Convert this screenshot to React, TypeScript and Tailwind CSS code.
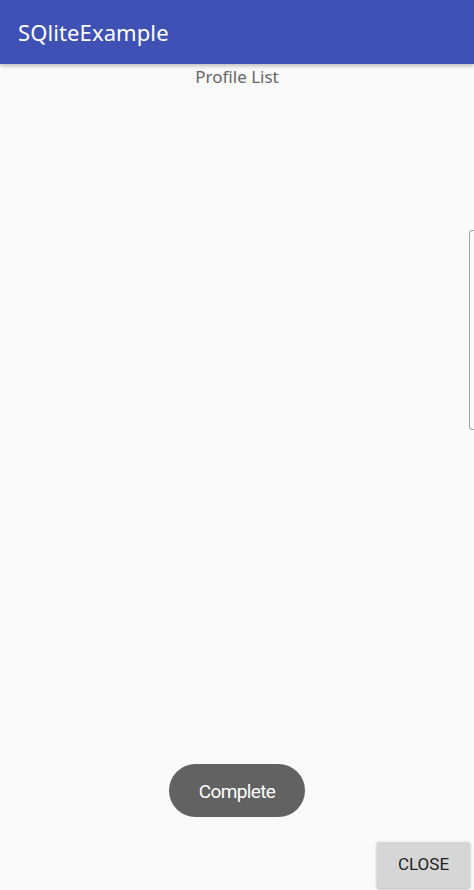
import React from 'react';

const App = () => {
  return (
    <div
      className="relative h-[890px] w-full bg-[#fafafa] flex flex-col overflow-hidden"
      style={{ fontFamily: 'Roboto, "Noto Sans", sans-serif' }}
    >
      {/* App bar */}
      <header className="h-[64px] bg-[#3f51b5] flex items-center px-[18px] shadow-[0_2px_4px_rgba(0,0,0,0.25)] z-10">
        <span className="text-white text-[22px] tracking-[0.1px]" style={{ fontFamily: '"Noto Sans", Roboto, sans-serif' }}>
          SQliteExample
        </span>
      </header>

      {/* Content */}
      <div className="flex-1 flex flex-col">
        <p className="text-center text-[#666666] text-[17px] leading-[24px] pt-[1px]" style={{ fontFamily: '"Noto Sans", Roboto, sans-serif' }}>
          Profile List
        </p>
        <div className="flex-1" />
        <div className="flex justify-end pr-[4px] pb-[2px]">
          <button className="w-[93px] h-[46px] bg-[#d6d6d6] rounded-[2px] shadow-[0_1px_3px_rgba(0,0,0,0.3)] text-[#222222] text-[17px] flex items-center justify-center">
            CLOSE
          </button>
        </div>
      </div>

      {/* Toast */}
      <div className="absolute left-[169px] top-[764px] w-[136px] h-[53px] rounded-full bg-[#626262] flex items-center justify-center pt-[3px]">
        <span className="text-white text-[19px] tracking-[-0.6px]">Complete</span>
      </div>

      {/* Edge panel handle */}
      <div className="absolute right-0 top-[230px] w-[5px] h-[200px] border border-r-0 border-[#a0a0a0] rounded-l-[4px]" />
    </div>
  );
};

export default App;
